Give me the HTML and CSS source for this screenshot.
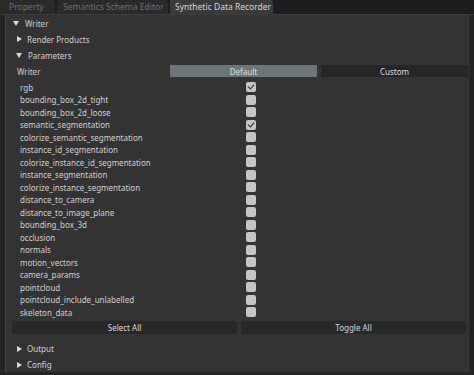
FILE: index.html
```html
<!DOCTYPE html>
<html lang="en">

<head>
    <meta charset="UTF-8">
    <title>Synthetic Data Recorder</title>
    <link rel="stylesheet" href="styles.css">
</head>

<body>
    <div class="tabs">
        <div class="tab">Property</div>
        <div class="tab">Semantics Schema Editor</div>
        <div class="tab active">Synthetic Data Recorder</div>
    </div>

    <div class="panel">
        <div class="section top">
            <span class="arrow down"></span>Writer
        </div>
        <div class="section sub">
            <span class="arrow right"></span>Render Products
        </div>
        <div class="section sub">
            <span class="arrow down"></span>Parameters
        </div>

        <div class="writer-row">
            <span class="label">Writer</span>
            <div class="combo">
                <button class="combo-btn selected">Default</button>
                <button class="combo-btn">Custom</button>
            </div>
        </div>

        <div class="params">
            <div class="param"><span>rgb</span><span class="check on"></span></div>
            <div class="param"><span>bounding_box_2d_tight</span><span class="check"></span></div>
            <div class="param"><span>bounding_box_2d_loose</span><span class="check"></span></div>
            <div class="param"><span>semantic_segmentation</span><span class="check on"></span></div>
            <div class="param"><span>colorize_semantic_segmentation</span><span class="check"></span></div>
            <div class="param"><span>instance_id_segmentation</span><span class="check"></span></div>
            <div class="param"><span>colorize_instance_id_segmentation</span><span class="check"></span></div>
            <div class="param"><span>instance_segmentation</span><span class="check"></span></div>
            <div class="param"><span>colorize_instance_segmentation</span><span class="check"></span></div>
            <div class="param"><span>distance_to_camera</span><span class="check"></span></div>
            <div class="param"><span>distance_to_image_plane</span><span class="check"></span></div>
            <div class="param"><span>bounding_box_3d</span><span class="check"></span></div>
            <div class="param"><span>occlusion</span><span class="check"></span></div>
            <div class="param"><span>normals</span><span class="check"></span></div>
            <div class="param"><span>motion_vectors</span><span class="check"></span></div>
            <div class="param"><span>camera_params</span><span class="check"></span></div>
            <div class="param"><span>pointcloud</span><span class="check"></span></div>
            <div class="param"><span>pointcloud_include_unlabelled</span><span class="check"></span></div>
            <div class="param"><span>skeleton_data</span><span class="check"></span></div>
        </div>

        <div class="actions">
            <button class="action-btn">Select All</button>
            <button class="action-btn">Toggle All</button>
        </div>

        <div class="section sub">
            <span class="arrow right"></span>Output
        </div>
        <div class="section sub">
            <span class="arrow right"></span>Config
        </div>
    </div>
</body>

</html>
```

FILE: styles.css
```css
* {
    margin: 0;
    padding: 0;
    box-sizing: border-box;
}

body {
    font-family: "Noto Sans", "DejaVu Sans", sans-serif;
    font-size: 8px;
    background: #232323;
    color: #cfcfcf;
    width: 474px;
    height: 375px;
    overflow: hidden;
}

.tabs {
    display: flex;
    height: 15px;
    background: #1d1d1f;
    border-bottom: 1px solid #3c3c3c;
}

.tab {
    height: 14px;
    line-height: 14px;
    padding: 0 0 0 9px;
    margin-right: 2px;
    background: #2a2a2a;
    color: #6e6e6e;
    font-size: 8.5px;
    white-space: nowrap;
    overflow: hidden;
    border-radius: 0 3px 0 0;
}

.tab:first-child {
    width: 55px;
}

.tab:nth-child(2) {
    width: 111px;
    padding-left: 6px;
}

.tab.active {
    width: 103px;
    padding-left: 5px;
    background: #3a3a3a;
    color: #d4d4d4;
}

.panel {
    margin-left: 5px;
    margin-right: 4px;
    height: 358px;
    background: #333333;
    border-left: 1px solid #414141;
    border-right: 1px solid #2a2a2a;
    border-bottom: 1px solid #262626;
}

.section {
    display: flex;
    align-items: center;
    height: 16px;
}

.section.top {
    padding-left: 7px;
    margin-top: 0px;
}

.section.sub {
    padding-left: 10px;
}

.arrow {
    display: inline-block;
    width: 0;
    height: 0;
    margin-right: 5px;
}

.arrow.down {
    border-left: 3px solid transparent;
    border-right: 3px solid transparent;
    border-top: 5px solid #d8d8d8;
    margin-left: 0;
    margin-right: 6px;
}

.arrow.right {
    border-top: 3px solid transparent;
    border-bottom: 3px solid transparent;
    border-left: 5px solid #d8d8d8;
    margin-left: 1px;
    margin-right: 5px;
}

.writer-row {
    display: flex;
    align-items: center;
    height: 16px;
    padding-left: 11px;
}

.writer-row .label {
    width: 153px;
}

.combo {
    display: flex;
    gap: 4px;
}

.combo-btn {
    width: 147px;
    height: 12px;
    border: none;
    font-family: inherit;
    font-size: 8px;
    color: #dedede;
    background: #262626;
}

.combo-btn.selected {
    background: #6b7777;
}

.params {
    padding-left: 14px;
    padding-top: 2px;
}

.param {
    display: grid;
    grid-template-columns: 226px 10px;
    align-items: center;
    height: 12.5px;
}

.check {
    width: 10px;
    height: 10px;
    border-radius: 2px;
    background: #c5c5c5;
    position: relative;
}

.check.on::after {
    content: "";
    position: absolute;
    left: 3px;
    top: 1px;
    width: 3px;
    height: 5px;
    border-right: 1.5px solid #2a2a2a;
    border-bottom: 1.5px solid #2a2a2a;
    transform: rotate(40deg);
}

.actions {
    display: flex;
    gap: 4px;
    padding-left: 6px;
    margin-top: 2px;
    margin-bottom: 7px;
}

.action-btn {
    width: 225px;
    height: 13px;
    border: none;
    background: #282828;
    color: #d8d8d8;
    font-family: inherit;
    font-size: 8px;
}
```
